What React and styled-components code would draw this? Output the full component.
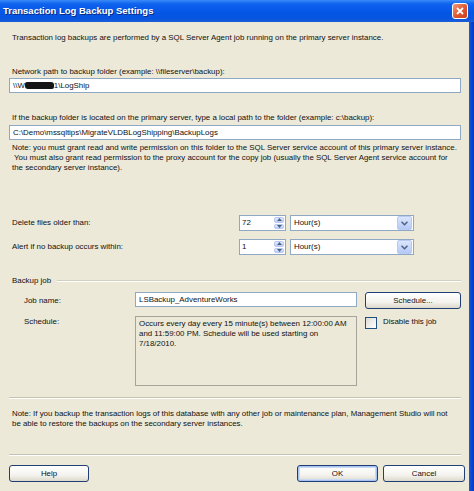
import React from "react";
import styled, { createGlobalStyle } from "styled-components";

const Global = createGlobalStyle`
  html, body { margin: 0; padding: 0; background: #ece9d8; }
  * { box-sizing: border-box; }
`;

const Window = styled.div`
  width: 474px;
  height: 491px;
  overflow: hidden;
  display: flex;
  flex-direction: column;
  font-family: "Liberation Sans", Arial, sans-serif;
  font-size: 7.9px;
  line-height: 10px;
  color: #111;
`;

const TitleBar = styled.div`
  height: 22px;
  flex: none;
  display: flex;
  align-items: center;
  justify-content: space-between;
  padding: 0 6px 0 3px;
  background: linear-gradient(#3a8bf8 0%, #0e62ee 18%, #0556e6 55%, #0754e0 85%, #1d5fd8 100%);
  color: #fff;
  font-weight: bold;
  font-size: 9.5px;
  text-shadow: 1px 1px 0 #0a2a80;
`;

const CloseBtn = styled.div`
  width: 16px;
  height: 16px;
  border: 1px solid #fff;
  border-radius: 3px;
  background: linear-gradient(135deg, #f29a7c, #e0562f 55%, #c8401c);
  display: flex;
  align-items: center;
  justify-content: center;
`;

const Frame = styled.div`
  flex: 1;
  display: flex;
  min-height: 0;
`;

const Body = styled.div`
  flex: 1;
  min-width: 0;
  padding: 11px 8px 0 9px;
  display: flex;
  flex-direction: column;
  background: #ece9d8;
`;

const RightEdge = styled.div`
  width: 5px;
  flex: none;
  background: linear-gradient(90deg, #1a5ae0, #0a46d0 50%, #0539c8);
`;

const Text = styled.div`
  padding-left: ${(p) => p.$indent || 3}px;
  margin-top: ${(p) => p.$top || 0}px;
  white-space: pre;
`;

const Field = styled.div`
  height: 15px;
  margin-top: ${(p) => p.$top || 0}px;
  background: #fff;
  border: 1px solid #8fa8c4;
  padding: 0 3px;
  display: flex;
  align-items: center;
  white-space: nowrap;
  overflow: hidden;
`;

const Redact = styled.span`
  display: inline-block;
  width: 29px;
  height: 7px;
  background: #151515;
  border-radius: 2px 3px 2px 3px;
`;

const PeriodRow = styled.div`
  display: grid;
  grid-template-columns: 226px 47px 124px;
  column-gap: 4px;
  align-items: center;
  height: 16px;
  margin-top: ${(p) => p.$top || 0}px;
`;

const Spin = styled.div`
  height: 16px;
  background: #fff;
  border: 1px solid #8fa8c4;
  display: flex;
  align-items: center;
  justify-content: space-between;
  padding-left: 2px;
`;

const SpinBtns = styled.div`
  width: 11px;
  height: 14px;
  display: flex;
  flex-direction: column;
  gap: 1px;
  padding: 1px 1px 1px 0;
`;

const SpinHalf = styled.div`
  flex: 1;
  border-radius: 2px;
  background: linear-gradient(#e4ecfd, #bccdf5);
  border: 1px solid #b5c8f2;
  display: flex;
  align-items: center;
  justify-content: center;
`;

const Combo = styled(Spin)`
  padding-left: 3px;
`;

const DropBtn = styled.div`
  width: 15px;
  height: 14px;
  margin-right: 1px;
  border-radius: 2px;
  background: linear-gradient(#dbe6fd, #b5c8f7);
  border: 1px solid #b9cbf3;
  display: flex;
  align-items: center;
  justify-content: center;
`;

const Group = styled.div`
  display: flex;
  align-items: center;
  gap: 6px;
  margin-top: 21px;
  padding-left: 3px;
  height: 10px;
`;

const GroupLine = styled.div`
  flex: 1;
  height: 2px;
  border-top: 1px solid #d0d0bf;
  border-bottom: 1px solid #fff;
`;

const JobGrid = styled.div`
  display: grid;
  grid-template-columns: 126px 222px 1fr;
  row-gap: 7px;
  margin-top: 6px;
`;

const JobLabel = styled.div`
  padding-left: 15px;
  align-self: ${(p) => (p.$start ? "start" : "center")};
  margin-top: ${(p) => (p.$start ? 1 : 0)}px;
`;

const Side = styled.div`
  padding-left: 8px;
`;

const XPButton = styled.div`
  height: 17px;
  width: ${(p) => (p.$w ? `${p.$w}px` : "auto")};
  border: 1px solid #1f3f75;
  border-radius: 3px;
  background: linear-gradient(#ffffff, #f4f3ee 60%, #dcd8cb);
  display: flex;
  align-items: center;
  justify-content: center;
  box-shadow: ${(p) => (p.$default ? "inset 0 0 0 1px #a8c1f0, inset 0 0 0 2px #c9daf7" : "none")};
`;

const ScheduleBox = styled.div`
  height: 70px;
  border: 1px solid #a5a49a;
  background: #ece9d8;
  padding: 2px 3px;
`;

const Check = styled.label`
  display: flex;
  align-items: flex-start;
  gap: 6px;
  margin-top: 1px;
`;

const Box = styled.span`
  width: 12px;
  height: 12px;
  flex: none;
  border: 1px solid #1c5180;
  background: linear-gradient(135deg, #dcdbd5, #fff);
`;

const Sep = styled.div`
  height: 2px;
  flex: none;
  margin-top: ${(p) => p.$top || 0}px;
  border-top: 1px solid #c5c2b2;
  border-bottom: 1px solid #fff;
`;

const Footer = styled.div`
  display: flex;
  align-items: center;
  margin-top: 9px;
  margin-right: -4px;
  gap: 5px;
`;

const Spacer = styled.div`
  flex: 1;
`;

const Up = () => (
  <svg width="5" height="3" viewBox="0 0 5 3">
    <path d="M0 3 L2.5 0 L5 3Z" fill="#4d6185" />
  </svg>
);
const Down = () => (
  <svg width="5" height="3" viewBox="0 0 5 3">
    <path d="M0 0 L2.5 3 L5 0Z" fill="#4d6185" />
  </svg>
);
const Chevron = () => (
  <svg width="7" height="5" viewBox="0 0 7 5">
    <path d="M0.5 0.8 L3.5 3.8 L6.5 0.8" stroke="#4d6185" strokeWidth="1.5" fill="none" />
  </svg>
);

const Period = ({ label, value, top }) => (
  <PeriodRow $top={top}>
    <Text>{label}</Text>
    <Spin>
      <span>{value}</span>
      <SpinBtns>
        <SpinHalf><Up /></SpinHalf>
        <SpinHalf><Down /></SpinHalf>
      </SpinBtns>
    </Spin>
    <Combo>
      <span>Hour(s)</span>
      <DropBtn><Chevron /></DropBtn>
    </Combo>
  </PeriodRow>
);

export default function App() {
  return (
    <Window>
      <Global />
      <TitleBar>
        <span>Transaction Log Backup Settings</span>
        <CloseBtn>
          <svg width="8" height="8" viewBox="0 0 8 8">
            <path d="M1 1 L7 7 M7 1 L1 7" stroke="#fff" strokeWidth="1.8" />
          </svg>
        </CloseBtn>
      </TitleBar>
      <Frame>
        <Body>
          <Text>Transaction log backups are performed by a SQL Server Agent job running on the primary server instance.</Text>
          <Text $top={24}>Network path to backup folder (example: \\fileserver\backup):</Text>
          <Field $top={1}>
            \\W<Redact />1\LogShip
          </Field>
          <Text $top={20}>If the backup folder is located on the primary server, type a local path to the folder (example: c:\backup):</Text>
          <Field $top={2}>C:\Demo\mssqltips\MigrateVLDBLogShipping\BackupLogs</Field>
          <Text $top={3}>
            {"Note: you must grant read and write permission on this folder to the SQL Server service account of this primary server instance.\n You must also grant read permission to the proxy account for the copy job (usually the SQL Server Agent service account for\nthe secondary server instance)."}
          </Text>
          <Period label="Delete files older than:" value="72" top={42} />
          <Period label="Alert if no backup occurs within:" value="1" top={8} />
          <Group>
            <span>Backup job</span>
            <GroupLine />
          </Group>
          <JobGrid>
            <JobLabel>Job name:</JobLabel>
            <Field>LSBackup_AdventureWorks</Field>
            <Side>
              <XPButton>Schedule...</XPButton>
            </Side>
            <JobLabel $start>Schedule:</JobLabel>
            <ScheduleBox>
              Occurs every day every 15 minute(s) between 12:00:00 AM and 11:59:00 PM. Schedule will be used starting on 7/18/2010.
            </ScheduleBox>
            <Side>
              <Check>
                <Box />
                <span>Disable this job</span>
              </Check>
            </Side>
          </JobGrid>
          <Sep $top={11} />
          <Text $top={10}>
            {"Note: If you backup the transaction logs of this database with any other job or maintenance plan, Management Studio will not\nbe able to restore the backups on the secondary server instances."}
          </Text>
          <Sep $top={25} />
          <Footer>
            <XPButton $w={80}>Help</XPButton>
            <Spacer />
            <XPButton $w={81} $default>OK</XPButton>
            <XPButton $w={82}>Cancel</XPButton>
          </Footer>
        </Body>
        <RightEdge />
      </Frame>
    </Window>
  );
}
